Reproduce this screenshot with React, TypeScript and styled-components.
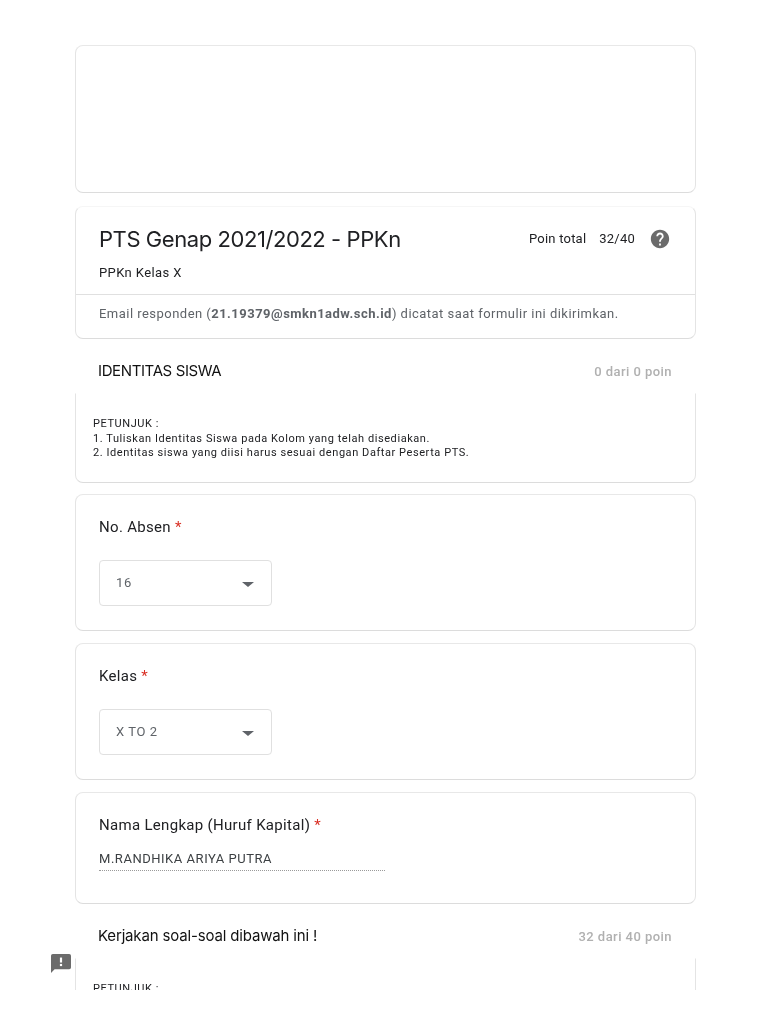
import React from 'react';
import styled, { createGlobalStyle } from 'styled-components';

const GlobalStyle = createGlobalStyle`
  html, body {
    margin: 0;
    padding: 0;
    background: #fff;
  }
  body {
    font-family: Roboto, "Liberation Sans", sans-serif;
    color: #202124;
  }
`;

const Page = styled.div`
  position: relative;
  box-sizing: border-box;
  width: 768px;
  height: 990px;
  padding: 45px 72px 0 75px;
  overflow: hidden;
  background: #fff;
  filter: blur(0.35px);
`;

const Card = styled.section<{ $open?: boolean; $height?: number; $gap?: number }>`
  box-sizing: border-box;
  height: ${(p) => (p.$height ? `${p.$height}px` : 'auto')};
  margin-bottom: ${(p) => p.$gap ?? 12}px;
  background: #fff;
  border: 1px solid #e4e4e4;
  border-bottom-color: #dcdcdc;
  border-top-color: ${(p) => (p.$open ? 'transparent' : '#e8e8e8')};
  border-radius: ${(p) => (p.$open ? '0 0 8px 8px' : '8px')};
`;

const HeaderCard = styled(Card)`
  border-top-color: #f6f6f6;
  margin-bottom: 0;
`;

const TitleBlock = styled.div`
  box-sizing: border-box;
  height: 88px;
  padding: 17px 24px 0 23px;
  border-bottom: 1px solid #e0e0e0;
`;

const TitleRow = styled.div`
  display: flex;
  align-items: center;
  justify-content: space-between;
`;

const Title = styled.h1`
  margin: 0;
  font-family: Inter, Roboto, sans-serif;
  font-size: 22px;
  font-weight: 400;
  line-height: 30px;
  letter-spacing: -0.43px;
`;

const Score = styled.div`
  display: flex;
  align-items: center;
  font-size: 13px;
  letter-spacing: 0.22px;
  span {
    margin-bottom: 1px;
  }
  span + span {
    margin-left: 13px;
  }
  svg {
    margin-left: 14px;
  }
`;

const Subtitle = styled.p`
  margin: 10px 0 0;
  font-size: 13px;
  line-height: 18px;
  letter-spacing: 0.4px;
`;

const EmailNote = styled.p`
  margin: 0;
  padding: 10px 24px 0 23px;
  font-size: 13px;
  line-height: 18px;
  letter-spacing: 0.47px;
  color: #5f6368;
  b {
    font-weight: 700;
  }
`;

const SectionHead = styled.header`
  box-sizing: border-box;
  display: flex;
  align-items: center;
  justify-content: space-between;
  height: 54px;
  padding: 10px 24px 0 23px;
`;

const SectionTitle = styled.h2<{ $caps?: boolean }>`
  margin: 0 0 2px;
  font-family: Inter, Roboto, sans-serif;
  font-size: 15px;
  font-weight: 400;
  letter-spacing: ${(p) => (p.$caps ? '-0.38px' : '-0.16px')};
  color: #111;
`;

const SectionPoints = styled.span`
  font-size: 13px;
  font-weight: 500;
  letter-spacing: 0.45px;
  color: #b0b0b0;
`;

const Note = styled.div`
  padding: 23px 17px 0;
  font-size: 11px;
  line-height: 14.5px;
  letter-spacing: 0.565px;
  color: #202124;
`;

const QuestionCard = styled(Card)`
  padding: 22px 23px 0;
`;

const Question = styled.div`
  font-family: Roboto, sans-serif;
  font-size: 15px;
  line-height: 20px;
  letter-spacing: 0.31px;
`;

const Required = styled.span`
  color: #d93025;
`;

const Select = styled.div`
  box-sizing: border-box;
  display: flex;
  align-items: center;
  justify-content: space-between;
  width: 173px;
  height: 46px;
  margin-top: 23px;
  padding: 0 16px 2px;
  border: 1px solid #e0e0e0;
  border-radius: 4px;
  font-size: 13px;
  letter-spacing: 0.6px;
  color: #5f6368;
`;

const Caret = styled.i`
  width: 0;
  height: 0;
  margin: 4px 1px 0 0;
  border-left: 6px solid transparent;
  border-right: 6px solid transparent;
  border-top: 5px solid #5f6368;
`;

const Answer = styled.div`
  box-sizing: border-box;
  width: 286px;
  height: 21px;
  margin-top: 15px;
  border-bottom: 1px dotted #9a9a9a;
  font-size: 13px;
  line-height: 18px;
  letter-spacing: 0.53px;
  color: #3c4043;
`;

const FeedbackButton = styled.svg`
  position: absolute;
  left: 50px;
  top: 953px;
`;

const HelpIcon = () => (
  <svg width="22" height="22" viewBox="0 0 24 24" fill="#6b6b6b">
    <path d="M12 2C6.48 2 2 6.48 2 12s4.48 10 10 10 10-4.48 10-10S17.52 2 12 2zm1 17h-2v-2h2v2zm2.07-7.75l-.9.92C13.45 12.9 13 13.5 13 15h-2v-.5c0-1.1.45-2.1 1.17-2.83l1.24-1.26c.37-.36.59-.86.59-1.41 0-1.1-.9-2-2-2s-2 .9-2 2H8c0-2.21 1.79-4 4-4s4 1.79 4 4c0 .88-.36 1.68-.93 2.25z" />
  </svg>
);

export default function App() {
  return (
    <>
      <GlobalStyle />
      <Page>
        <Card $height={148} $gap={13} />
        <HeaderCard $height={133}>
          <TitleBlock>
            <TitleRow>
              <Title>PTS Genap 2021/2022 - PPKn</Title>
              <Score>
                <span>Poin total</span>
                <span>32/40</span>
                <HelpIcon />
              </Score>
            </TitleRow>
            <Subtitle>PPKn Kelas X</Subtitle>
          </TitleBlock>
          <EmailNote>
            Email responden (<b>21.19379@smkn1adw.sch.id</b>) dicatat saat formulir ini dikirimkan.
          </EmailNote>
        </HeaderCard>

        <SectionHead>
          <SectionTitle $caps>IDENTITAS SISWA</SectionTitle>
          <SectionPoints>0 dari 0 poin</SectionPoints>
        </SectionHead>
        <Card $open $height={90} $gap={11}>
          <Note>
            PETUNJUK :<br />
            1. Tuliskan Identitas Siswa pada Kolom yang telah disediakan.<br />
            2. Identitas siswa yang diisi harus sesuai dengan Daftar Peserta PTS.
          </Note>
        </Card>

        <QuestionCard $height={137}>
          <Question>No. Absen <Required>*</Required></Question>
          <Select>16<Caret /></Select>
        </QuestionCard>
        <QuestionCard $height={137}>
          <Question>Kelas <Required>*</Required></Question>
          <Select>X TO 2<Caret /></Select>
        </QuestionCard>
        <QuestionCard $height={112} $gap={0}>
          <Question>Nama Lengkap (Huruf Kapital) <Required>*</Required></Question>
          <Answer>M.RANDHIKA ARIYA PUTRA</Answer>
        </QuestionCard>

        <SectionHead>
          <SectionTitle>Kerjakan soal-soal dibawah ini !</SectionTitle>
          <SectionPoints>32 dari 40 poin</SectionPoints>
        </SectionHead>
        <Card $open $height={90}>
          <Note>PETUNJUK :</Note>
        </Card>

        <FeedbackButton width="22" height="20" viewBox="0 0 24 22">
          <path
            fill="#6b6b6b"
            d="M3 1h18a2 2 0 0 1 2 2v13a2 2 0 0 1-2 2H5l-4 4V3a2 2 0 0 1 2-2z"
          />
          <rect x="10.8" y="5" width="2.4" height="5.5" fill="#fff" />
          <rect x="10.8" y="12" width="2.4" height="2.4" fill="#fff" />
        </FeedbackButton>
      </Page>
    </>
  );
}
